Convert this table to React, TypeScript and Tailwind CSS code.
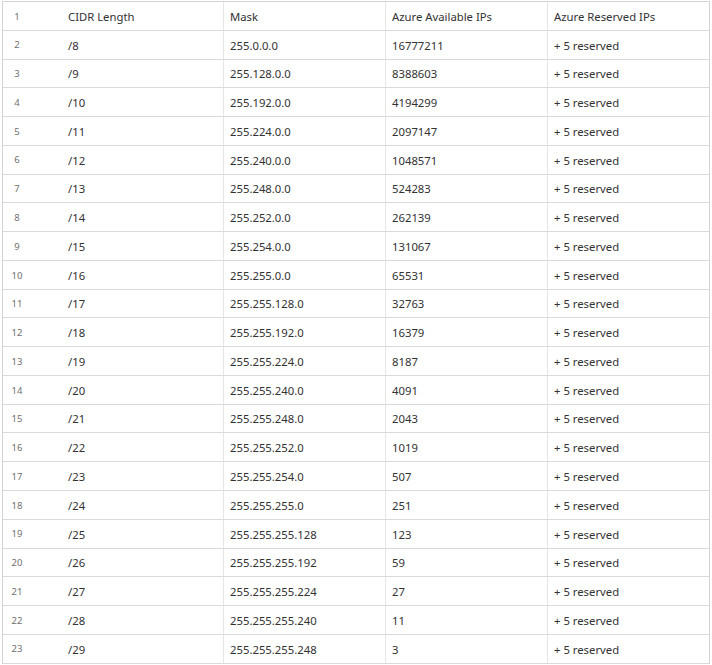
import React from "react";

interface Row {
  cidr: string;
  mask: string;
  available: string;
  reserved: string;
}

const maskFor = (bits: number) => {
  const parts: number[] = [];
  for (let i = 0; i < 4; i++) {
    const b = Math.max(0, Math.min(8, bits - i * 8));
    parts.push(256 - Math.pow(2, 8 - b));
  }
  return parts.join(".");
};

const rows: Row[] = [];
for (let n = 8; n <= 29; n++) {
  rows.push({
    cidr: "/" + n,
    mask: maskFor(n),
    available: String(Math.pow(2, 32 - n) - 5),
    reserved: "+ 5 reserved",
  });
}

const header: Row = {
  cidr: "CIDR Length",
  mask: "Mask",
  available: "Azure Available IPs",
  reserved: "Azure Reserved IPs",
};

const TableRow: React.FC<{ index: number; row: Row }> = ({ index, row }) => (
  <div className="grid grid-cols-[221px_162px_162px_162px] h-[28.77px] border-b border-[#dadada] items-stretch">
    <div className="flex items-center pt-[1px] border-r border-[#e6e6e6]">
      <span className="w-[28px] text-center text-[9.5px] text-[#707070]">{index}</span>
      <span className="ml-[37px]">{row.cidr}</span>
    </div>
    <div className="flex items-center pt-[1px] pl-[6px] border-r border-[#e6e6e6]">{row.mask}</div>
    <div className="flex items-center pt-[1px] pl-[6px] border-r border-[#e6e6e6]">{row.available}</div>
    <div className="flex items-center pt-[1px] pl-[6px] border-r border-[#d4d4d4]">{row.reserved}</div>
  </div>
);

export default function App() {
  return (
    <div className="bg-white w-[712px] h-[665px] overflow-hidden pt-[1px] pl-[2px]">
      <div
        className="w-[708px] border-l border-t border-[#d4d4d4] text-[11.3px] text-[#323232] leading-none"
        style={{ fontFamily: '"Noto Sans", "Open Sans", sans-serif' }}
      >
        <TableRow index={1} row={header} />
        {rows.map((r, i) => (
          <TableRow key={r.cidr} index={i + 2} row={r} />
        ))}
      </div>
    </div>
  );
}
